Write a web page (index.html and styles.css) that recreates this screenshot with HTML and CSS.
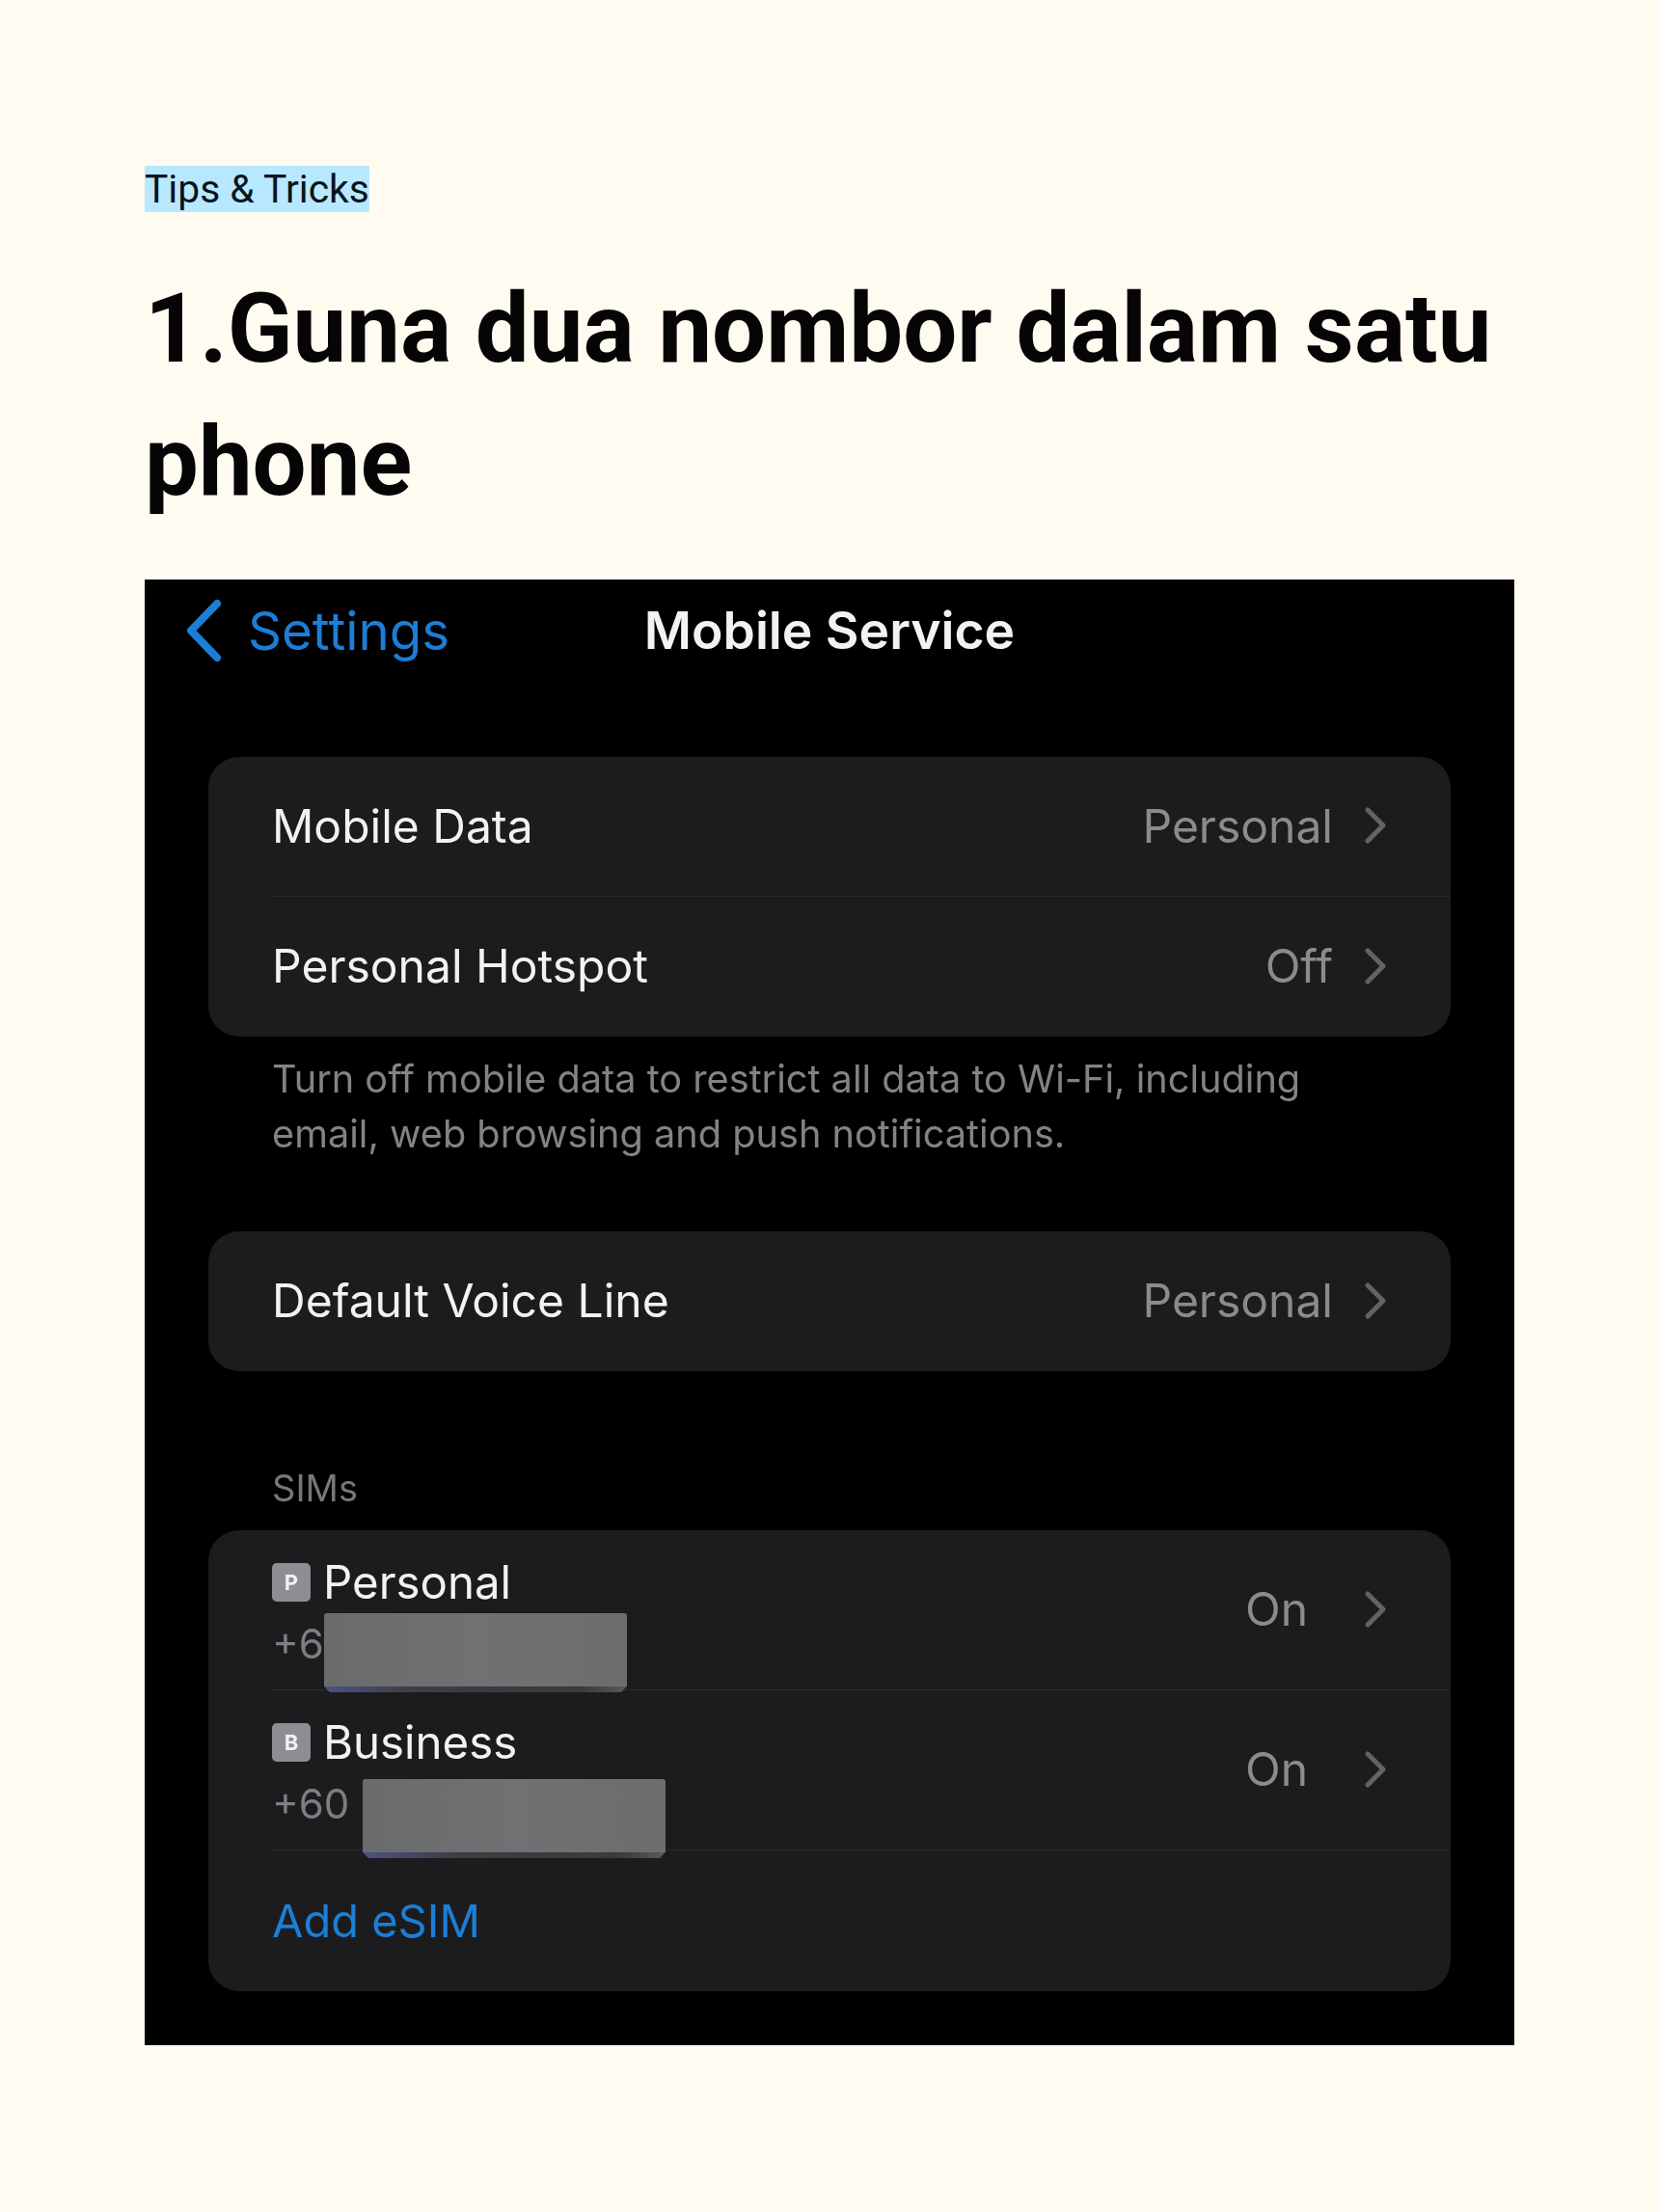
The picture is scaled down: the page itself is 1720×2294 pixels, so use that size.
FILE: index.html
```html
<!DOCTYPE html>
<html lang="en">
<head>
    <meta charset="UTF-8">
    <meta name="viewport" content="width=device-width, initial-scale=1.0">
    <title>Tips &amp; Tricks</title>
    <link rel="stylesheet" href="styles.css">
</head>
<body>
    <main class="article">
        <p class="tag"><span class="tag-text">Tips &amp; Tricks</span></p>
        <h1 class="title">1.Guna dua nombor dalam satu phone</h1>

        <div class="phone">
            <div class="nav">
                <div class="back">
                    <svg class="back-icon" viewBox="0 0 40 66" width="40" height="66"><path d="M35 5 L8 33 L35 61" /></svg>
                    <span>Settings</span>
                </div>
                <div class="nav-title">Mobile Service</div>
            </div>

            <div class="card first">
                <div class="row row-line">
                    <span class="row-label">Mobile Data</span>
                    <span class="row-value">Personal</span>
                    <svg class="chevron" viewBox="0 0 24 38" width="24" height="38"><path d="M4 3 L20 19 L4 35" /></svg>
                </div>
                <div class="row">
                    <span class="row-label">Personal Hotspot</span>
                    <span class="row-value">Off</span>
                    <svg class="chevron" viewBox="0 0 24 38" width="24" height="38"><path d="M4 3 L20 19 L4 35" /></svg>
                </div>
            </div>
            <p class="note">Turn off mobile data to restrict all data to Wi-Fi, including<br>email, web browsing and push notifications.</p>

            <div class="card voice">
                <div class="row">
                    <span class="row-label">Default Voice Line</span>
                    <span class="row-value">Personal</span>
                    <svg class="chevron" viewBox="0 0 24 38" width="24" height="38"><path d="M4 3 L20 19 L4 35" /></svg>
                </div>
            </div>

            <div class="section-label">SIMs</div>
            <div class="card">
                <div class="row sim-row row-line">
                    <div class="sim-info">
                        <div class="sim-name"><span class="sim-badge">P</span>Personal</div>
                        <div class="sim-number">+6</div>
                    </div>
                    <span class="row-value sim-value">On</span>
                    <svg class="chevron" viewBox="0 0 24 38" width="24" height="38"><path d="M4 3 L20 19 L4 35" /></svg>
                    <div class="redact redact-one"></div>
                </div>
                <div class="row sim-row row-line">
                    <div class="sim-info">
                        <div class="sim-name"><span class="sim-badge">B</span>Business</div>
                        <div class="sim-number">+60</div>
                    </div>
                    <span class="row-value sim-value">On</span>
                    <svg class="chevron" viewBox="0 0 24 38" width="24" height="38"><path d="M4 3 L20 19 L4 35" /></svg>
                    <div class="redact redact-two"></div>
                </div>
                <div class="row add-row">
                    <span class="add-link">Add eSIM</span>
                </div>
            </div>
        </div>
    </main>
</body>
</html>
```

FILE: styles.css
```css
body {
    margin: 0;
    background-color: #fffbf0;
    color: #000;
    font-family: Roboto, sans-serif;
}
.article {
    padding: 172px 150px 174px;
}
.tag {
    margin: 0;
    height: 48px;
    font-size: 40.8px;
    line-height: 48px;
}
.tag-text {
    display: inline-block;
    background-color: #b8e8ff;
    color: #07141c;
}
.title {
    margin: 52px 0 0;
    font-size: 99.4px;
    font-weight: 700;
    line-height: 138px;
    color: #050505;
}
.phone {
    margin-top: 53px;
    height: 1520px;
    box-sizing: border-box;
    padding: 0 66px;
    background-color: #000;
    font-family: Inter, "Noto Sans", sans-serif;
    color: #f2f2f4;
}
.nav {
    position: relative;
    height: 184px;
    display: flex;
    justify-content: center;
    padding-top: 22px;
    box-sizing: border-box;
    filter: blur(0.6px);
}
.nav-title {
    font-size: 53.4px;
    font-weight: 600;
    line-height: 62px;
}
.back {
    position: absolute;
    left: -26px;
    top: 20px;
    display: flex;
    align-items: center;
    gap: 27px;
    color: #1c7ed6;
    font-size: 54.6px;
    line-height: 62px;
}
.back-icon path {
    fill: none;
    stroke: #1c7ed6;
    stroke-width: 8;
    stroke-linecap: round;
    stroke-linejoin: round;
}
.card {
    background-color: #1c1c1e;
    border-radius: 32px;
    padding-left: 66px;
}
.row {
    position: relative;
    height: 145px;
    display: flex;
    align-items: center;
    box-sizing: border-box;
    padding-right: 66px;
    padding-bottom: 2px;
    font-size: 48px;
}
.row-line {
    border-bottom: 1px solid #2c2c2e;
}
.row-label {
    flex: 1;
    filter: blur(0.5px);
}
.row-value {
    color: #8b8b8e;
    margin-right: 32px;
    filter: blur(0.5px);
}
.chevron path {
    fill: none;
    stroke: #636366;
    stroke-width: 5;
    stroke-linecap: round;
    stroke-linejoin: round;
}
.note {
    margin: 16px 0 0;
    padding-left: 66px;
    font-size: 39.7px;
    line-height: 57px;
    color: #838387;
    filter: blur(0.5px);
}
.voice {
    margin-top: 72px;
}
.section-label {
    margin-top: 98px;
    margin-bottom: 21px;
    padding-left: 66px;
    font-size: 38px;
    line-height: 46px;
    color: #77777b;
    filter: blur(0.5px);
}
.sim-row {
    height: 166px;
}
.sim-info {
    flex: 1;
    padding-top: 9px;
    filter: blur(0.5px);
}
.sim-name {
    display: flex;
    align-items: center;
    gap: 13px;
    font-size: 47.4px;
    line-height: 62px;
}
.sim-badge {
    width: 40px;
    height: 40px;
    border-radius: 5px;
    background-color: #8e8e92;
    color: #f2f2f4;
    font-size: 22px;
    font-weight: 700;
    line-height: 40px;
    text-align: center;
}
.sim-number {
    margin-top: 2px;
    font-size: 42px;
    line-height: 62px;
    color: #7e7e82;
}
.sim-value {
    margin-right: 58px;
}
/* grey block that hides the phone numbers, hangs over the row line */
.redact {
    position: absolute;
    height: 82px;
    width: 314px;
    background: linear-gradient(90deg, #6a6b6d, #707173 50%, #6c6d6e);
    border-radius: 3px 3px 0 0;
    clip-path: polygon(0 0, 100% 0, 100% 92%, 98% 100%, 2% 100%, 0 92%);
}
.redact::after {
    content: '';
    position: absolute;
    left: 0;
    right: 0;
    bottom: 0;
    height: 6px;
    background: linear-gradient(90deg, #4b5286, #3d3d42 30%, #3a3a3d 85%, #5a5a5c);
}
.redact-one {
    left: 54px;
    top: 86px;
}
.redact-two {
    left: 94px;
    top: 92px;
}
.add-row {
    height: 146px;
}
.add-link {
    color: #1c7ed6;
    font-size: 47px;
    filter: blur(0.5px);
}
```
